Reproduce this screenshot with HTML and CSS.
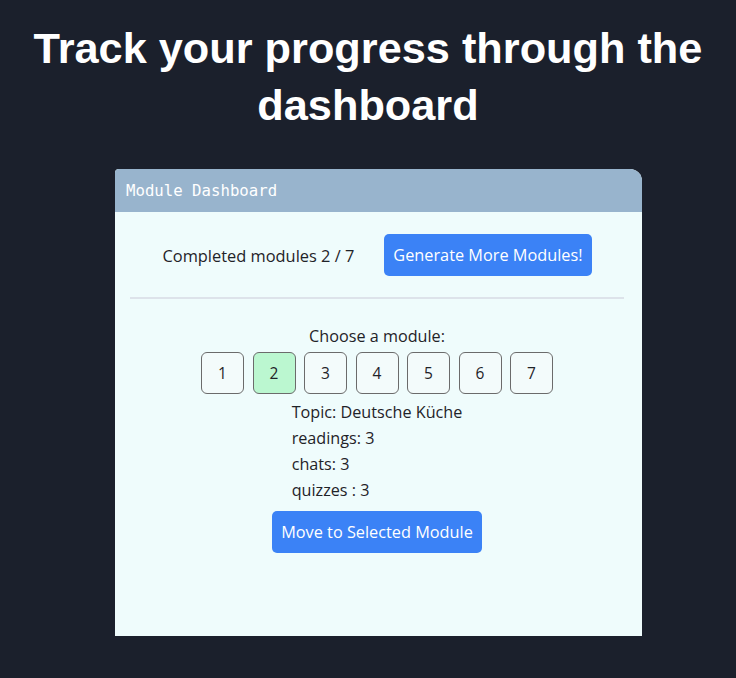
FILE: index.html
```html
<!DOCTYPE html>
<html>
<head>
<meta charset="utf-8">
<link rel="stylesheet" href="styles.css">
</head>
<body>
<h1 class="title">Track your progress through the dashboard</h1>
<div class="card">
  <div class="card-header">Module Dashboard</div>
  <div class="card-body">
    <div class="top-row">
      <span class="completed">Completed modules 2 / 7</span>
      <button class="btn">Generate More Modules!</button>
    </div>
    <hr class="divider">
    <div class="choose">Choose a module:</div>
    <div class="modules">
      <button class="mod">1</button>
      <button class="mod selected">2</button>
      <button class="mod">3</button>
      <button class="mod">4</button>
      <button class="mod">5</button>
      <button class="mod">6</button>
      <button class="mod">7</button>
    </div>
    <div class="info">
      <div>Topic: Deutsche Küche</div>
      <div>readings: 3</div>
      <div>chats: 3</div>
      <div>quizzes : 3</div>
    </div>
    <div class="move-row">
      <button class="btn">Move to Selected Module</button>
    </div>
  </div>
</div>
</body>
</html>
```
FILE: styles.css
```css
html, body {
  margin: 0;
  padding: 0;
  background: #1b202c;
}
body {
  width: 736px;
  height: 678px;
  overflow: hidden;
}
.title {
  margin: 20px 10px 0 10px;
  font-family: "Liberation Sans", Arial, sans-serif;
  font-weight: bold;
  font-size: 43.3px;
  line-height: 57px;
  color: #ffffff;
  text-align: center;
}
.card {
  margin: 35px 0 0 115px;
  width: 527px;
  height: 467px;
  background: #effcfc;
  border-radius: 4px 12px 0 0;
  overflow: hidden;
  font-family: "Open Sans", "Noto Sans", sans-serif;
  font-size: 16.2px;
  color: #1f2328;
}
.card-header {
  height: 43px;
  background: #98b4cd;
  color: #ffffff;
  font-family: "DejaVu Sans Mono", "Liberation Mono", monospace;
  font-size: 15.7px;
  line-height: 43px;
  padding-left: 11px;
}
.card-body {
  padding: 22px 18px 0 15px;
}
.top-row {
  display: flex;
  justify-content: center;
  align-items: center;
  gap: 30px;
}
.completed {
  font-size: 16.4px;
}
.btn {
  font-family: "Open Sans", "Noto Sans", sans-serif;
  font-size: 16.3px;
  color: #ffffff;
  background: #3b82f6;
  border: none;
  border-radius: 5px;
  height: 42px;
  padding: 0 9px;
}
.divider {
  margin: 21px 0 0 0;
  border: none;
  height: 2px;
  background: #dde3ea;
}
.choose {
  margin-top: 25px;
  text-align: center;
  line-height: 24px;
}
.modules {
  display: flex;
  justify-content: center;
  gap: 8.5px;
  margin-top: 4px;
}
.mod {
  width: 43px;
  height: 42px;
  border: 1px solid #6b6b6b;
  border-radius: 6px;
  background: #f3fbfb;
  font-family: "Open Sans", "Noto Sans", sans-serif;
  font-size: 15.5px;
  color: #1f2328;
  padding: 0;
}
.mod.selected {
  background: #bbf7d0;
}
.info {
  display: flex;
  flex-direction: column;
  width: max-content;
  margin: 5px auto 0 auto;
  line-height: 26px;
}
.move-row {
  display: flex;
  justify-content: center;
  margin-top: 8px;
}
```
